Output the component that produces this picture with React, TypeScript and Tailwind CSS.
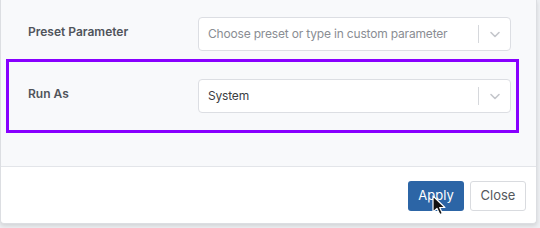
import React from 'react';

const Chevron: React.FC = () => (
  <svg width="12" height="12" viewBox="0 0 12 12" fill="none" stroke="#c4c6cb" strokeWidth={1.6} strokeLinecap="round" strokeLinejoin="round">
    <path d="M2 4.5 6 8.5l4-4" />
  </svg>
);

const Cursor: React.FC = () => (
  <svg width="14" height="21" viewBox="0 0 14 21" className="absolute left-[431px] top-[28px]">
    <path d="M1 1v16l4-3.6 2.8 6.2 2.6-1.1-2.7-6h5.2z" fill="#111" stroke="#fff" strokeWidth={1.2} strokeLinejoin="round" />
  </svg>
);

const SelectBox: React.FC<{ value: string; placeholder?: boolean }> = ({ value, placeholder }) => (
  <div className="flex h-[34px] w-[313px] items-center rounded-[4px] border border-[#dcdee3] bg-white">
    <span className={`flex-1 truncate pl-[9px] text-[12px] tracking-[-0.015em] ${placeholder ? 'text-[#8a8d93]' : 'text-[#3a3d42]'}`}>
      {value}
    </span>
    <div className="h-[18px] w-px bg-[#d6d8dc]" />
    <div className="flex w-[31px] justify-center">
      <Chevron />
    </div>
  </div>
);

export default function App() {
  return (
    <div className="h-[228px] w-[540px] overflow-hidden bg-[#eef0f3] font-['Inter','Noto_Sans',sans-serif]">
      <div className="w-[537px] rounded-b-[4px] border-x border-b border-[#dcdee2] bg-white shadow-[0_2px_4px_rgba(0,0,0,0.12)]">
        {/* body */}
        <div className="border-b border-[#e3e5e9] bg-[#f8f9fb] pb-[33px] pl-[5px] pt-[17px]">
          <div className="flex h-[34px] w-[513px] items-center px-[3px]">
            <span className="mb-[4px] w-[189px] pl-[19px] text-[12px] font-semibold text-[#50545b]">Preset Parameter</span>
            <SelectBox value="Choose preset or type in custom parameter" placeholder />
          </div>
          <div className="mt-[8px] flex h-[74px] w-[513px] items-center border-[3px] border-[#8800ff] pb-[1px]">
            <span className="mb-[4px] w-[189px] pl-[19px] text-[12px] font-semibold text-[#50545b]">Run As</span>
            <SelectBox value="System" />
          </div>
        </div>
        {/* footer */}
        <div className="relative flex h-[56px] items-start justify-end gap-[6px] pr-[10px] pt-[14px]">
          <button className="h-[30px] w-[56px] rounded-[3px] bg-[#2c65a6] text-[13px] text-white">Apply</button>
          <button className="h-[30px] w-[56px] rounded-[3px] border border-[#d9dbdf] bg-white text-[13px] text-[#55585d]">Close</button>
          <Cursor />
        </div>
      </div>
    </div>
  );
}
